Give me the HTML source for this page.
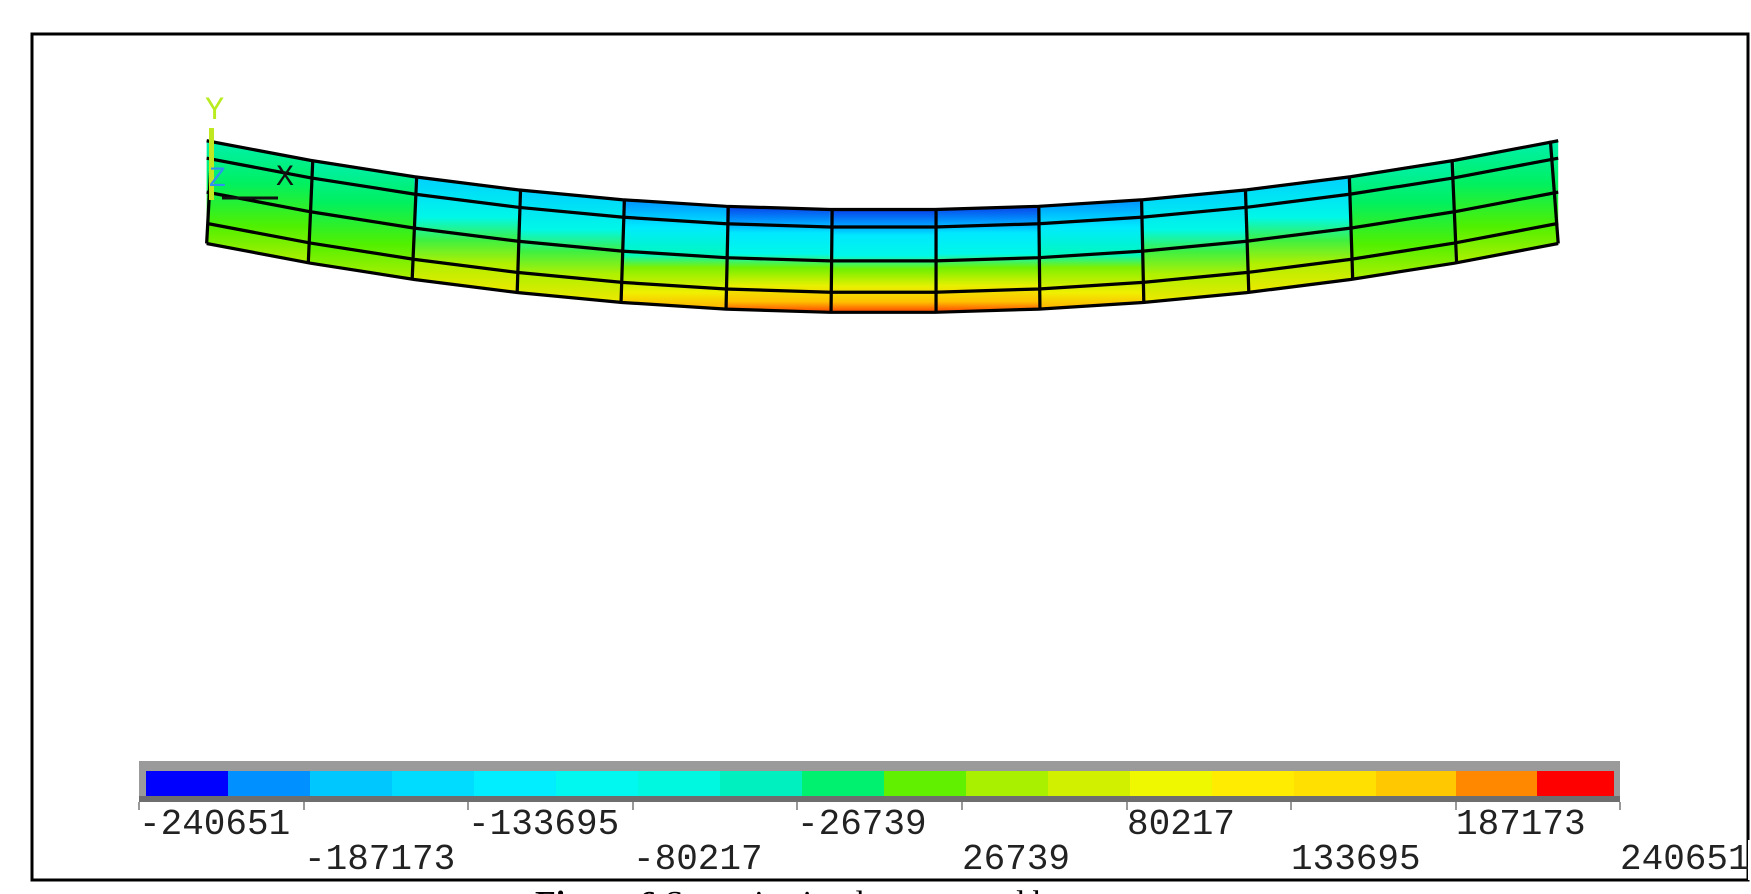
<!DOCTYPE html>
<html><head><meta charset="utf-8"><style>
html,body{margin:0;padding:0;background:#fff;width:1751px;height:894px;overflow:hidden}
svg{display:block}
.m{font-family:"Liberation Mono",monospace;font-size:36px;fill:#222}
</style></head><body>
<svg width="1751" height="894" viewBox="0 0 1751 894" xmlns="http://www.w3.org/2000/svg">
<defs>
<linearGradient id="gc" x1="0" y1="0" x2="0" y2="1"><stop offset="0" stop-color="#0a40e8"/><stop offset=".14" stop-color="#0098ff"/><stop offset=".25" stop-color="#00e8ff"/><stop offset=".45" stop-color="#00f8e8"/><stop offset=".58" stop-color="#70f000"/><stop offset=".75" stop-color="#e8f000"/><stop offset=".9" stop-color="#ffc000"/><stop offset="1" stop-color="#ff4000"/></linearGradient>
<linearGradient id="gn" x1="0" y1="0" x2="0" y2="1"><stop offset="0" stop-color="#0090ff"/><stop offset=".25" stop-color="#00eaff"/><stop offset=".5" stop-color="#00f8c0"/><stop offset=".62" stop-color="#80f000"/><stop offset=".85" stop-color="#f0f000"/><stop offset="1" stop-color="#ffb000"/></linearGradient>
<linearGradient id="gm" x1="0" y1="0" x2="0" y2="1"><stop offset="0" stop-color="#00d0ff"/><stop offset=".35" stop-color="#00f8e8"/><stop offset=".55" stop-color="#40f040"/><stop offset=".75" stop-color="#b0f000"/><stop offset="1" stop-color="#f0e800"/></linearGradient>
<linearGradient id="ge" x1="0" y1="0" x2="0" y2="1"><stop offset="0" stop-color="#00f0b0"/><stop offset=".35" stop-color="#00f060"/><stop offset=".7" stop-color="#50f000"/><stop offset="1" stop-color="#b0f000"/></linearGradient>
</defs>
<rect x="32" y="34" width="1716" height="846" fill="none" stroke="#000" stroke-width="3"/>
<g transform="scale(1.117)">
<polygon points="185,126 278,143.6 278,235.6 185,218" fill="url(#ge)"/>
<polygon points="278,143.6 371,158.2 371,250.2 278,235.6" fill="url(#ge)"/>
<polygon points="371,158.2 464,170 464,262 371,250.2" fill="url(#gm)"/>
<polygon points="464,170 557,178.8 557,270.8 464,262" fill="url(#gm)"/>
<polygon points="557,178.8 650,184.7 650,276.7 557,270.8" fill="url(#gn)"/>
<polygon points="650,184.7 743,187.6 743,279.6 650,276.7" fill="url(#gc)"/>
<polygon points="743,187.6 837,187.6 837,279.6 743,279.6" fill="url(#gc)"/>
<polygon points="837,187.6 930,184.7 930,276.7 837,279.6" fill="url(#gc)"/>
<polygon points="930,184.7 1023,178.8 1023,270.8 930,276.7" fill="url(#gn)"/>
<polygon points="1023,178.8 1116,170 1116,262 1023,270.8" fill="url(#gm)"/>
<polygon points="1116,170 1209,158.2 1209,250.2 1116,262" fill="url(#gm)"/>
<polygon points="1209,158.2 1302,143.6 1302,235.6 1209,250.2" fill="url(#ge)"/>
<polygon points="1302,143.6 1395,126 1395,218 1302,235.6" fill="url(#ge)"/>
<g fill="none" stroke="#000" stroke-width="2.9">
<polyline points="185,126 278,143.6 371,158.2 464,170 557,178.8 650,184.7 743,187.6 837,187.6 930,184.7 1023,178.8 1116,170 1209,158.2 1302,143.6 1395,126"/>
<polyline points="185,141.6 278,159.2 371,173.8 464,185.6 557,194.4 650,200.3 743,203.2 837,203.2 930,200.3 1023,194.4 1116,185.6 1209,173.8 1302,159.2 1395,141.6"/>
<polyline points="185,172 278,189.6 371,204.2 464,216 557,224.8 650,230.7 743,233.6 837,233.6 930,230.7 1023,224.8 1116,216 1209,204.2 1302,189.6 1395,172"/>
<polyline points="185,200 278,217.6 371,232.2 464,244 557,252.8 650,258.7 743,261.6 837,261.6 930,258.7 1023,252.8 1116,244 1209,232.2 1302,217.6 1395,200"/>
<polyline points="185,218 278,235.6 371,250.2 464,262 557,270.8 650,276.7 743,279.6 837,279.6 930,276.7 1023,270.8 1116,262 1209,250.2 1302,235.6 1395,218"/>
<path d="M190,126L185,218M280,143.6L276,235.6M373,158.2L369,250.2M466,170L463,262M559,178.8L556,270.8M652,184.7L650,276.7M745,187.6L744,279.6M838,187.6L838,279.6M930,184.7L931,276.7M1022,178.8L1024,270.8M1115,170L1118,262M1208,158.2L1211,250.2M1300,143.6L1304,235.6M1388,126L1395,218"/>
</g>
</g>
<rect x="209" y="128" width="5" height="72" fill="#c0e820"/>
<text x="205" y="119" font-family="Liberation Mono,monospace" font-size="32" fill="#b8ec20">Y</text>
<text x="209" y="186" font-family="Liberation Mono,monospace" font-size="28" fill="#3090f0">Z</text>
<text x="276" y="185" font-family="Liberation Mono,monospace" font-size="30" fill="#111">X</text>
<line x1="222" y1="198" x2="278" y2="198" stroke="#111" stroke-width="3"/>
<rect x="139" y="761" width="1481" height="41" fill="#9a9a9a"/>
<rect x="139" y="796" width="1481" height="6" fill="#6e6e6e"/>
<g>
<rect x="146" y="771" width="82" height="25" fill="#0000ff"/>
<rect x="228" y="771" width="82" height="25" fill="#0090ff"/>
<rect x="310" y="771" width="82" height="25" fill="#00c8ff"/>
<rect x="392" y="771" width="82" height="25" fill="#00dcff"/>
<rect x="474" y="771" width="82" height="25" fill="#00eeff"/>
<rect x="556" y="771" width="82" height="25" fill="#00f8f0"/>
<rect x="638" y="771" width="82" height="25" fill="#00f8e0"/>
<rect x="720" y="771" width="82" height="25" fill="#00f0c0"/>
<rect x="802" y="771" width="82" height="25" fill="#00f070"/>
<rect x="884" y="771" width="82" height="25" fill="#60f000"/>
<rect x="966" y="771" width="82" height="25" fill="#a8f000"/>
<rect x="1048" y="771" width="82" height="25" fill="#d0f000"/>
<rect x="1130" y="771" width="82" height="25" fill="#f0f800"/>
<rect x="1212" y="771" width="82" height="25" fill="#ffec00"/>
<rect x="1294" y="771" width="82" height="25" fill="#ffe000"/>
<rect x="1376" y="771" width="80" height="25" fill="#ffc800"/>
<rect x="1456" y="771" width="81" height="25" fill="#ff8800"/>
<rect x="1537" y="771" width="77" height="25" fill="#ff0000"/>
</g>
<path d="M139,802v8M304,802v8M468,802v8M633,802v8M797,802v8M962,802v8M1127,802v8M1291,802v8M1456,802v8M1620,802v8" stroke="#999" stroke-width="2"/>
<text class="m" x="139" y="834">-240651</text>
<text class="m" x="468" y="834">-133695</text>
<text class="m" x="797" y="834">-26739</text>
<text class="m" x="1127" y="834">80217</text>
<text class="m" x="1456" y="834">187173</text>
<text class="m" x="304" y="869">-187173</text>
<text class="m" x="633" y="869">-80217</text>
<text class="m" x="962" y="869">26739</text>
<text class="m" x="1291" y="869">133695</text>
<text class="m" x="1620" y="869">240651</text>
<rect x="1748" y="840" width="3" height="40" fill="#fff"/>
<text x="535" y="914" font-family="Liberation Serif,serif" font-size="34" fill="#000"><tspan font-weight="bold">Figure 6</tspan> Stress in simply supported beam</text>
</svg>
</body></html>
